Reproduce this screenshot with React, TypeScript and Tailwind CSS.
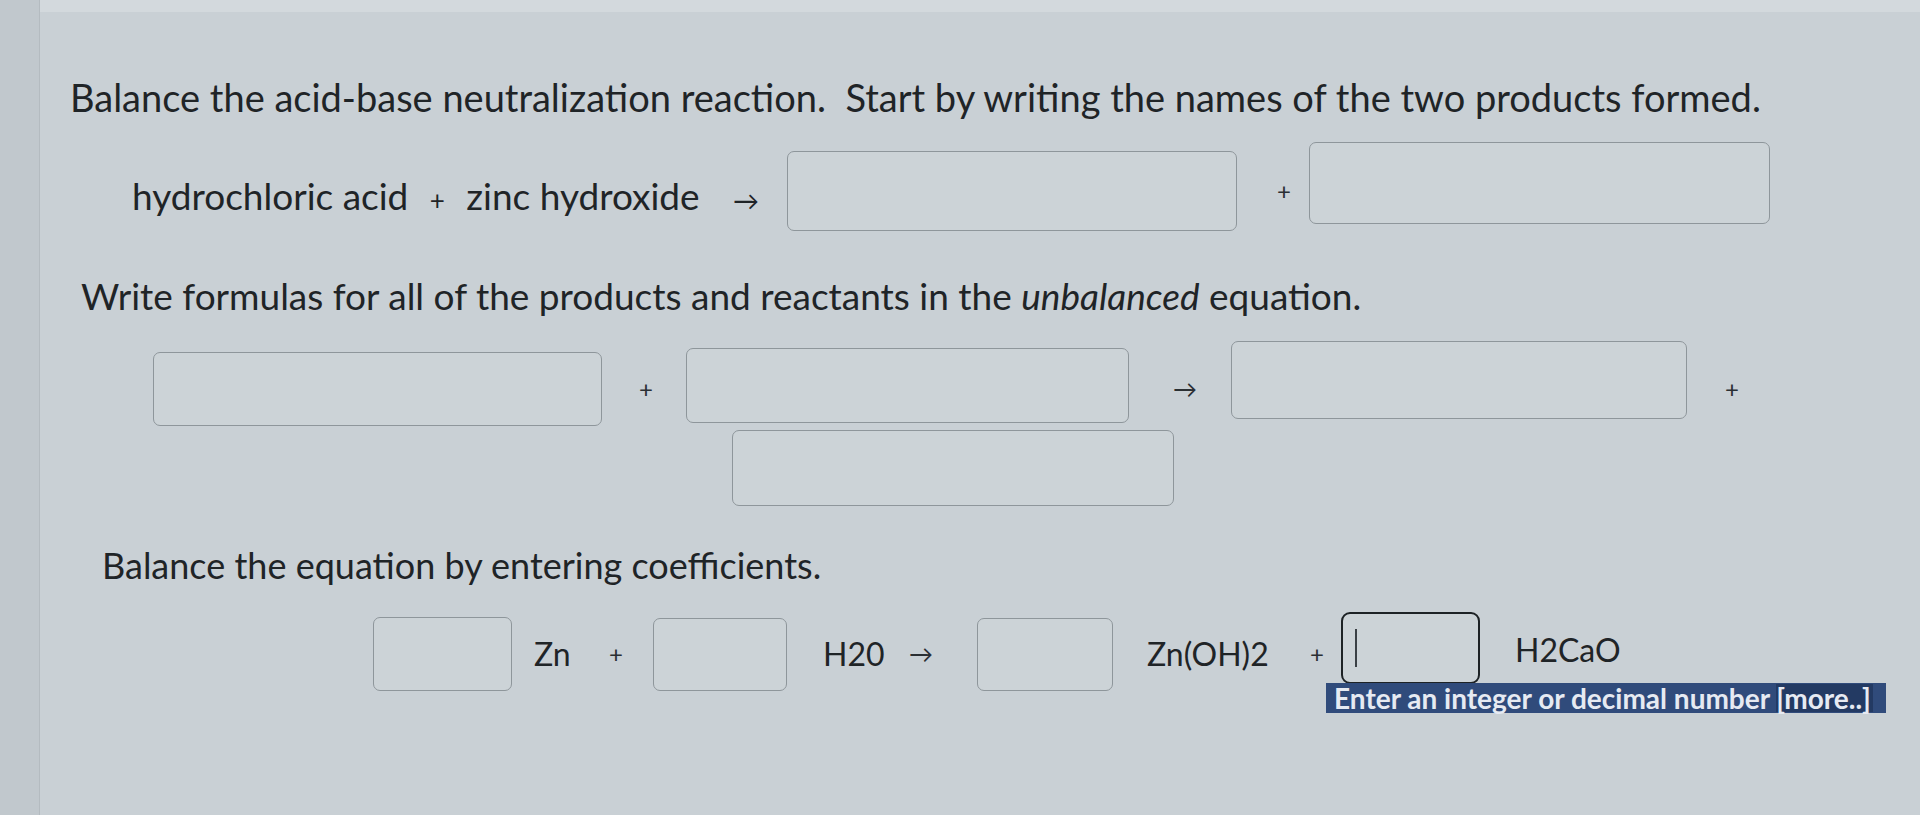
import React from 'react';

const font = { fontFamily: 'Lato, "Noto Sans", sans-serif' };

const Box = ({ className = '' }: { className?: string }) => (
  <div className={`shrink-0 rounded-[7px] border-[1.5px] border-[#8e969b] bg-[#ccd3d7] ${className}`} />
);

const Op = ({ children, className = '' }: { children: React.ReactNode; className?: string }) => (
  <span className={`shrink-0 text-[24px] text-[#2a2f33] ${className}`}>{children}</span>
);

export default function App() {
  return (
    <div className="flex h-[815px] w-full overflow-hidden bg-[#c9d0d5] text-[#1f2427]" style={font}>
      <div className="w-[40px] shrink-0 border-r border-[#b4bbc0] bg-[#c1c8cd]" />
      <div className="flex flex-1 flex-col border-t-[12px] border-[#d3d9dd]">
        <p className="ml-[30px] mt-[65px] whitespace-nowrap text-[38px] leading-[40px]">
          Balance the acid-base neutralization reaction.&nbsp; Start by writing the names of the two products formed.
        </p>

        <div className="mt-[33px] flex items-center">
          <span className="ml-[92px] w-[630px] shrink-0 translate-y-[7px] whitespace-nowrap text-[37px] leading-[40px]">
            hydrochloric acid <span className="mx-[12px] text-[26px]">+</span> zinc hydroxide <span className="ml-[24px] text-[26px]">→</span>
          </span>
          <Box className="ml-[25px] h-[80px] w-[450px]" />
          <Op className="ml-[40px] w-[32px]">+</Op>
          <Box className="h-[82px] w-[461px] -translate-y-[8px]" />
        </div>

        <p className="ml-[41px] mt-[44px] whitespace-nowrap text-[37px] leading-[40px]">
          Write formulas for all of the products and reactants in the <em>unbalanced</em> equation.
        </p>

        <div className="mt-[34px] flex items-center">
          <Box className="ml-[113px] h-[74px] w-[449px]" />
          <Op className="ml-[37px] w-[47px]">+</Op>
          <Box className="h-[75px] w-[443px] -translate-y-[4px]" />
          <Op className="ml-[44px] w-[58px]">→</Op>
          <Box className="h-[78px] w-[456px] -translate-y-[9px]" />
          <Op className="ml-[38px]">+</Op>
        </div>
        <Box className="ml-[692px] mt-[2px] h-[76px] w-[442px]" />

        <p className="ml-[62px] mt-[39px] whitespace-nowrap text-[36px] leading-[40px]">
          Balance the equation by entering coefficients.
        </p>

        <div className="mt-[32px] flex items-center text-[32px]">
          <Box className="ml-[333px] h-[74px] w-[139px]" />
          <span className="ml-[22px] w-[75px] shrink-0">Zn</span>
          <Op className="w-[44px]">+</Op>
          <Box className="h-[73px] w-[134px]" />
          <span className="ml-[36px] w-[86px] shrink-0">H20</span>
          <Op className="w-[68px]">→</Op>
          <Box className="h-[73px] w-[136px]" />
          <span className="ml-[34px] w-[163px] shrink-0">Zn(OH)2</span>
          <Op className="w-[31px]">+</Op>
          <div className="relative h-[72px] w-[139px] shrink-0 -translate-y-[6px]">
            <div className="flex h-full w-full items-center rounded-[9px] border-[2.5px] border-[#1d2225] bg-[#ccd3d7] pl-[12px]">
              <div className="h-[38px] w-[2px] bg-[#3a4045]" />
            </div>
            <div className="absolute left-[-15px] top-[71px] flex h-[30px] w-[560px] items-center whitespace-nowrap bg-[#304b7b] pl-[8px] text-[28px] font-bold leading-none text-[#e6eaf2]">
              Enter an integer or decimal number
              <span className="ml-[6px] flex h-[28px] items-center bg-[#233a63] pr-[2px]">[more..]</span>
            </div>
          </div>
          <span className="ml-[35px] shrink-0 -translate-y-[4px]">H2CaO</span>
        </div>
      </div>
    </div>
  );
}
